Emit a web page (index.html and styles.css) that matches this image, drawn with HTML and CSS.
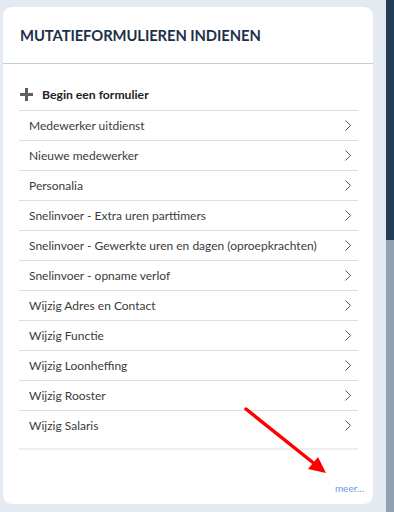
FILE: index.html
```html
<!DOCTYPE html>
<html>
<head>
<meta charset="utf-8">
<link rel="stylesheet" href="styles.css">
</head>
<body>
<div class="page">
  <div class="card">
    <div class="card-header">
      <h2 class="title">MUTATIEFORMULIEREN INDIENEN</h2>
    </div>
    <div class="card-body">
      <div class="begin">
        <svg class="plus" width="13" height="13" viewBox="0 0 13 13"><path d="M5 0h3v5h5v3H8v5H5V8H0V5h5z" fill="#5f5f5f"/></svg>
        <span>Begin een formulier</span>
      </div>
      <ul class="list">
        <li class="row"><span>Medewerker uitdienst</span><svg class="chev" width="6" height="11" viewBox="0 0 6 11"><path d="M0.5 0.5l5 5-5 5" fill="none" stroke="#555" stroke-width="1"/></svg></li>
        <li class="row"><span>Nieuwe medewerker</span><svg class="chev" width="6" height="11" viewBox="0 0 6 11"><path d="M0.5 0.5l5 5-5 5" fill="none" stroke="#555" stroke-width="1"/></svg></li>
        <li class="row"><span>Personalia</span><svg class="chev" width="6" height="11" viewBox="0 0 6 11"><path d="M0.5 0.5l5 5-5 5" fill="none" stroke="#555" stroke-width="1"/></svg></li>
        <li class="row"><span>Snelinvoer - Extra uren parttimers</span><svg class="chev" width="6" height="11" viewBox="0 0 6 11"><path d="M0.5 0.5l5 5-5 5" fill="none" stroke="#555" stroke-width="1"/></svg></li>
        <li class="row"><span>Snelinvoer - Gewerkte uren en dagen (oproepkrachten)</span><svg class="chev" width="6" height="11" viewBox="0 0 6 11"><path d="M0.5 0.5l5 5-5 5" fill="none" stroke="#555" stroke-width="1"/></svg></li>
        <li class="row"><span>Snelinvoer - opname verlof</span><svg class="chev" width="6" height="11" viewBox="0 0 6 11"><path d="M0.5 0.5l5 5-5 5" fill="none" stroke="#555" stroke-width="1"/></svg></li>
        <li class="row"><span>Wijzig Adres en Contact</span><svg class="chev" width="6" height="11" viewBox="0 0 6 11"><path d="M0.5 0.5l5 5-5 5" fill="none" stroke="#555" stroke-width="1"/></svg></li>
        <li class="row"><span>Wijzig Functie</span><svg class="chev" width="6" height="11" viewBox="0 0 6 11"><path d="M0.5 0.5l5 5-5 5" fill="none" stroke="#555" stroke-width="1"/></svg></li>
        <li class="row"><span>Wijzig Loonheffing</span><svg class="chev" width="6" height="11" viewBox="0 0 6 11"><path d="M0.5 0.5l5 5-5 5" fill="none" stroke="#555" stroke-width="1"/></svg></li>
        <li class="row"><span>Wijzig Rooster</span><svg class="chev" width="6" height="11" viewBox="0 0 6 11"><path d="M0.5 0.5l5 5-5 5" fill="none" stroke="#555" stroke-width="1"/></svg></li>
        <li class="row"><span>Wijzig Salaris</span><svg class="chev" width="6" height="11" viewBox="0 0 6 11"><path d="M0.5 0.5l5 5-5 5" fill="none" stroke="#555" stroke-width="1"/></svg></li>
      </ul>
      <div class="footer"><a class="more" href="#">meer...</a></div>
    </div>
  </div>
  <div class="scrollbar">
    <div class="thumb"></div>
    <div class="track"></div>
  </div>
  <svg class="arrow" width="394" height="512" viewBox="0 0 394 512">
    <line x1="246" y1="409" x2="316" y2="465" stroke="#ff0000" stroke-width="3.5" stroke-linecap="round"/>
    <polygon points="326,473 308,469 318,457" fill="#ff0000"/>
  </svg>
</div>
</body>
</html>
```
FILE: styles.css
```css
* { box-sizing: border-box; }
html, body { margin: 0; padding: 0; }
body {
  background: #e4eaf2;
  font-family: Lato, "Liberation Sans", sans-serif;
  width: 394px;
  height: 512px;
  overflow: hidden;
}
.page {
  position: relative;
  display: flex;
  height: 512px;
}
.card {
  margin: 7px 0 0 3px;
  width: 370px;
  height: 497px;
  background: #ffffff;
  border-radius: 9px;
  display: flex;
  flex-direction: column;
}
.card-header {
  height: 57px;
  border-bottom: 1px solid #c3cbd5;
  padding: 0 0 0 17px;
  display: flex;
  align-items: center;
}
.title {
  margin: 0;
  font-size: 14.8px;
  font-weight: 700;
  letter-spacing: -0.1px;
  color: #1c3148;
}
.card-body {
  flex: 1;
  display: flex;
  flex-direction: column;
  padding: 0 15px 0 16px;
}
.begin {
  height: 46px;
  padding: 16px 0 2px 1px;
  display: flex;
  align-items: center;
  gap: 9px;
  font-size: 12.2px;
  font-weight: 700;
  color: #222;
}
.list {
  list-style: none;
  margin: 0;
  padding: 0 0 8px 0;
  border-bottom: 2px solid #eeeeee;
}
.row {
  height: 30px;
  border-top: 1px solid #dddddd;
  display: flex;
  align-items: center;
  justify-content: space-between;
  padding: 0 7px 0 10px;
  font-size: 12px;
  color: #3b3b3b;
}
.footer {
  flex: 1;
  display: flex;
  justify-content: flex-end;
  align-items: flex-end;
  padding: 0 0 10px 0;
  margin-right: -6px;
}
.more {
  font-size: 10px;
  color: #7399d8;
  text-decoration: none;
}
.scrollbar {
  margin-left: 13px;
  width: 8px;
  display: flex;
  flex-direction: column;
}
.thumb { height: 240px; background: #243d55; }
.track { flex: 1; background: #8ea2b4; }
.arrow {
  position: absolute;
  left: 0;
  top: 0;
  pointer-events: none;
}
```
